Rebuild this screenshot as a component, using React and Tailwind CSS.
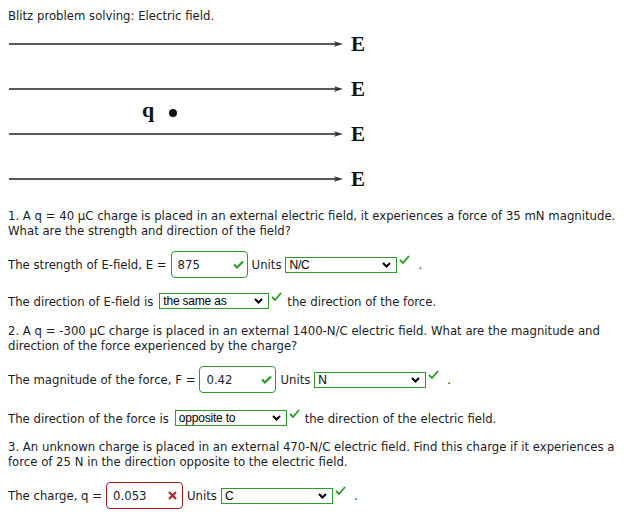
import React from 'react';

const body = { fontFamily: '"DejaVu Sans Condensed", "DejaVu Sans", sans-serif' };

function Check({ small }) {
  return small ? (
    <svg width="11" height="9" viewBox="0 0 11 9" className="mx-[2px] -mt-[10px] shrink-0">
      <path d="M1 5 L4 8 L10 1" fill="none" stroke="#2a9a2a" strokeWidth="1.8" />
    </svg>
  ) : (
    <svg width="11" height="9" viewBox="0 0 11 9" className="shrink-0">
      <path d="M1 4.5 L4 7.5 L10 1.5" fill="none" stroke="#2f9a2f" strokeWidth="2.2" />
    </svg>
  );
}

function Cross() {
  return (
    <svg width="9" height="9" viewBox="0 0 9 9" className="mr-[2px] shrink-0">
      <path d="M1 1 L8 8 M8 1 L1 8" stroke="#a52a2a" strokeWidth="2.2" />
    </svg>
  );
}

function Answer({ value, ok = true }) {
  return (
    <div
      className={`mx-[4px] flex h-[27px] w-[77px] items-center justify-between rounded-[4px] border-[1.5px] pl-[6px] pr-[3px] text-[13px] ${
        ok ? 'border-[#2e9a2e]' : 'border-[#9b1b1b]'
      }`}
    >
      <span>{value}</span>
      {ok ? <Check /> : <Cross />}
    </div>
  );
}

function Pick({ value, w }) {
  return (
    <div
      className={`flex h-[16px] shrink-0 items-center justify-between border border-[#2e9a2e] pl-[3px] pr-[5px] text-[12px] text-black ${w}`}
      style={{ fontFamily: '"Liberation Sans", Arial, sans-serif', letterSpacing: '-0.2px' }}
    >
      <span className="leading-none">{value}</span>
      <svg width="9" height="6" viewBox="0 0 9 6">
        <path d="M1 1 L4.5 4.5 L8 1" fill="none" stroke="#000" strokeWidth="2" />
      </svg>
    </div>
  );
}

function Field() {
  const ys = [14, 59, 104, 149];
  return (
    <svg width="380" height="165" viewBox="0 0 380 165" className="ml-[-8px] block">
      {ys.map((y, i) => (
        <g key={y}>
          <line x1="9" y1={y} x2="336" y2={y} stroke={i === 3 ? '#555' : '#222'} strokeWidth={i === 3 ? 1.8 : 1.4} />
          <path d={`M334 ${y - 2.8} L343 ${y} L334 ${y + 2.8} L336 ${y} Z`} fill="#333" />
          <text x="351" y={y + 7} fontFamily="Liberation Serif, serif" fontWeight="bold" fontSize="21" fill="#111">
            E
          </text>
        </g>
      ))}
      <text x="142" y="87" fontFamily="Liberation Serif, serif" fontWeight="bold" fontSize="22" fill="#111">
        q
      </text>
      <circle cx="173" cy="83" r="4" fill="#111" />
    </svg>
  );
}

export default function App() {
  return (
    <div
      className="min-h-screen bg-white pl-[8px] pt-[8px] text-[13px] leading-[15px] text-[#1c1c28]"
      style={body}
    >
      <div>Blitz problem solving: Electric field.</div>
      <div className="mt-[7px]">
        <Field />
      </div>

      <p className="mt-[13px]">
        1. A q = 40 μC charge is placed in an external electric field, it experiences a force of 35 mN magnitude.
        <br />
        What are the strength and direction of the field?
      </p>
      <div className="mt-[13px] flex items-center">
        <span>The strength of E-field, E =</span>
        <Answer value="875" />
        <span className="mr-[4px]">Units</span>
        <Pick value="N/C" w="w-[112px]" />
        <Check small />
        <span className="ml-[6px]">.</span>
      </div>
      <div className="mt-[15px] flex items-center">
        <span className="mr-[6px]">The direction of E-field is</span>
        <Pick value="the same as" w="w-[110px]" />
        <Check small />
        <span className="ml-[3px]">the direction of the force.</span>
      </div>

      <p className="mt-[14px]">
        2. A q = -300 μC charge is placed in an external 1400-N/C electric field. What are the magnitude and
        <br />
        direction of the force experienced by the charge?
      </p>
      <div className="mt-[13px] flex items-center">
        <span>The magnitude of the force, F =</span>
        <Answer value="0.42" />
        <span className="mr-[4px]">Units</span>
        <Pick value="N" w="w-[112px]" />
        <Check small />
        <span className="ml-[6px]">.</span>
      </div>
      <div className="mt-[17px] flex items-center">
        <span className="mr-[6px]">The direction of the force is</span>
        <Pick value="opposite to" w="w-[112px]" />
        <Check small />
        <span className="ml-[3px]">the direction of the electric field.</span>
      </div>

      <p className="mt-[13px]">
        3. An unknown charge is placed in an external 470-N/C electric field. Find this charge if it experiences a
        <br />
        force of 25 N in the direction opposite to the electric field.
      </p>
      <div className="mt-[13px] flex items-center">
        <span>The charge, q =</span>
        <Answer value="0.053" ok={false} />
        <span className="mr-[4px]">Units</span>
        <Pick value="C" w="w-[112px]" />
        <Check small />
        <span className="ml-[6px]">.</span>
      </div>
    </div>
  );
}
